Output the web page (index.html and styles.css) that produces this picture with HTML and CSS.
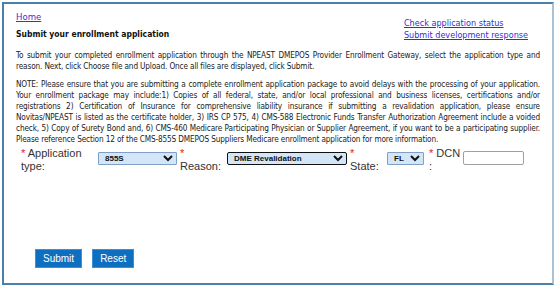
FILE: index.html
```html
<!DOCTYPE html>
<html>
<head>
<meta charset="utf-8">
<link rel="stylesheet" href="styles.css">
</head>
<body>
<div class="frame">
  <div class="top">
    <div class="title-col">
      <a class="home" href="#">Home</a>
      <h1 class="title">Submit your enrollment application</h1>
    </div>
    <div class="links">
      <a href="#">Check application status</a>
      <a href="#">Submit development response</a>
    </div>
  </div>
  <p class="text">
    <span class="ln">To submit your completed enrollment application through the NPEAST DMEPOS Provider Enrollment Gateway, select the application type and</span>
    <span class="ln last">reason. Next, click Choose file and Upload. Once all files are displayed, click Submit.</span>
  </p>
  <p class="text note">
    <span class="ln">NOTE: Please ensure that you are submitting a complete enrollment application package to avoid delays with the processing of your application.</span>
    <span class="ln">Your enrollment package may include:1) Copies of all federal, state, and/or local professional and business licenses, certifications and/or</span>
    <span class="ln">registrations 2) Certification of Insurance for comprehensive liability insurance if submitting a revalidation application, please ensure</span>
    <span class="ln">Novitas/NPEAST is listed as the certificate holder, 3) IRS CP 575, 4) CMS-588 Electronic Funds Transfer Authorization Agreement include a voided</span>
    <span class="ln">check, 5) Copy of Surety Bond and, 6) CMS-460 Medicare Participating Physician or Supplier Agreement, if you want to be a participating supplier.</span>
    <span class="ln last">Please reference Section 12 of the CMS-855S DMEPOS Suppliers Medicare enrollment application for more information.</span>
  </p>
  <div class="form">
    <label class="fld f-app"><span class="req">*</span> Application type:</label>
    <select class="sel s-app"><option>855S</option></select>
    <label class="fld f-reason"><span class="req">*</span> Reason:</label>
    <select class="sel s-reason"><option>DME Revalidation</option></select>
    <label class="fld f-state"><span class="req">*</span> State:</label>
    <select class="sel s-state"><option>FL</option></select>
    <label class="fld f-dcn"><span class="req">*</span> DCN :</label>
    <input class="dcn" type="text">
  </div>
  <div class="buttons">
    <button class="btn">Submit</button>
    <button class="btn">Reset</button>
  </div>
</div>
</body>
</html>
```

FILE: styles.css
```css
html, body {
  margin: 0;
  padding: 0;
  background: #ffffff;
}
body {
  padding: 2px 2px 0 2px;
  font-family: "DejaVu Sans Condensed", "DejaVu Sans", sans-serif;
  color: #222222;
}
.frame {
  box-sizing: border-box;
  width: 552px;
  height: 283px;
  border-top: 2px solid #4a80ad;
  border-left: 2px solid #4a80ad;
  border-bottom: 2px solid #4a80ad;
  border-right: 2px solid #a8c3d8;
  padding: 0 12px 0 12px;
}
.top {
  display: flex;
  justify-content: space-between;
  align-items: flex-start;
}
.title-col {
  display: flex;
  flex-direction: column;
  padding-top: 7px;
}
.home {
  font-size: 9.5px;
  color: #4a2fc0;
  line-height: 12px;
}
.title {
  margin: 6px 0 0 0;
  font-size: 8.5px;
  font-weight: bold;
  line-height: 11px;
  color: #111;
}
.links {
  display: flex;
  flex-direction: column;
  padding-top: 14px;
  padding-right: 12px;
}
.links a {
  font-size: 9px;
  line-height: 11.5px;
  color: #2f2fd6;
}
.text {
  margin: 9px 0 0 0;
  font-size: 8.2px;
  letter-spacing: -0.15px;
  line-height: 11px;
  color: #222;
}
.text.note {
  margin-top: 7px;
}
.ln {
  display: block;
  white-space: nowrap;
  text-align: justify;
  text-align-last: justify;
}
.ln.last {
  text-align-last: left;
}
.form {
  display: flex;
  align-items: flex-start;
  margin-top: 2px;
  padding-left: 5px;
  font-family: "Liberation Sans", Arial, sans-serif;
  color: #333;
}
.fld {
  font-size: 11px;
  line-height: 13px;
}
.req {
  color: #e02020;
  font-size: 11px;
}
.f-app { width: 77px; }
.f-reason { width: 47px; margin-left: 3px; }
.f-state { width: 33px; margin-left: 3px; margin-right: 4px; }
.f-dcn { width: 34px; margin-left: 5px; }
.sel {
  margin-top: 5px;
  height: 13px;
  font-family: "Liberation Sans", Arial, sans-serif;
  font-size: 8px;
  font-weight: bold;
  color: #111;
  background: #d3e6f8;
  border: 1px solid #7f9fc4;
  border-radius: 1px;
  padding: 0 0 0 2px;
}
.s-app { width: 79px; }
.s-reason {
  width: 120px;
  border: 1.5px solid #111;
  border-radius: 2px;
}
.s-state { width: 37px; }
.dcn {
  margin-top: 4px;
  width: 61px;
  height: 14px;
  box-sizing: border-box;
  border: 1px solid #a0a0a0;
  border-radius: 2px;
  padding: 0;
}
.buttons {
  display: flex;
  gap: 10px;
  margin-top: 76px;
  padding-left: 19px;
}
.btn {
  height: 19px;
  padding: 0 7px;
  background: #0e6fc1;
  color: #ffffff;
  border: 1px solid #3f8fd4;
  font-family: "Liberation Sans", Arial, sans-serif;
  font-size: 10px;
}
```
